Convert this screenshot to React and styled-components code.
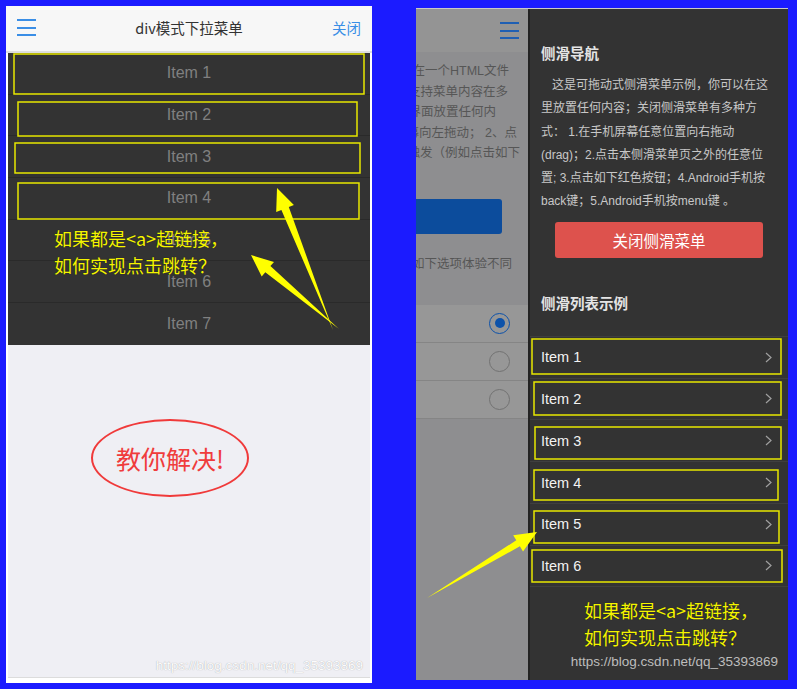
import React from "react";
import styled, { createGlobalStyle } from "styled-components";

const FONT = `"Liberation Sans", Arial, "Noto Sans CJK SC", sans-serif`;
const CJK = `"Noto Sans CJK SC", "Liberation Sans", sans-serif`;

const Global = createGlobalStyle`
  html, body { margin: 0; padding: 0; background: #1b1bff; }
  body { font-family: ${FONT}; }
  * { box-sizing: border-box; }
`;

const Page = styled.div`
  width: 797px;
  height: 689px;
  overflow: hidden;
  display: flex;
  align-items: flex-start;
  gap: 44px;
  padding: 6px 0 0 6px;
`;

/* ---------- left phone ---------- */
const DropPhone = styled.section`
  position: relative;
  width: 366px;
  height: 677px;
  background: #fff;
  display: flex;
  flex-direction: column;
  padding: 0 2px 5px;
`;

const TopBar = styled.header`
  height: 47px;
  margin: 0 -2px;
  background: #f7f7f7;
  border-bottom: 2px solid #dedede;
  display: grid;
  grid-template-columns: 1fr auto 1fr;
  align-items: center;
  padding: 0 11px 2px;
`;

const Burger = styled.span`
  display: flex;
  flex-direction: column;
  gap: 5.5px;
  width: 19px;
  justify-self: ${(p) => p.$align || "start"};
  & > i {
    display: block;
    height: 2px;
    background: ${(p) => p.$color};
  }
`;

const Title = styled.h1`
  margin: 0;
  font-family: ${CJK};
  font-weight: 400;
  font-size: 14.5px;
  color: #333;
`;

const CloseLink = styled.a`
  justify-self: end;
  font-family: ${CJK};
  font-size: 14.5px;
  color: #3a8ee6;
`;

const Content = styled.main`
  flex: 1;
  background: #efeff4;
  border-bottom: 1px solid #dcdcdc;
`;

const Menu = styled.nav`
  background: #333;
`;

const MenuRow = styled.div`
  height: 41.67px;
  display: flex;
  align-items: center;
  justify-content: center;
  font-size: 16px;
  color: #808080;
  border-bottom: 1px solid #2a2a2a;
  &:last-child { border-bottom: none; }
`;

const Callout = styled.div`
  position: absolute;
  left: 85px;
  top: 413px;
  width: 158px;
  height: 78px;
  border: 2px solid #f03a3a;
  border-radius: 50%;
  display: flex;
  align-items: center;
  justify-content: center;
  font-family: ${CJK};
  font-size: 25px;
  color: #f03c3c;
`;

const Watermark = styled.div`
  position: absolute;
  right: ${(p) => p.$right}px;
  top: ${(p) => p.$top}px;
  font-size: 13.5px;
  line-height: 16px;
  white-space: nowrap;
  color: ${(p) => (p.$light ? "#fcfcfc" : "#bdbdbd")};
  text-shadow: ${(p) => (p.$light ? "0 0 1px rgba(0,0,0,0.35)" : "none")};
`;

const Note = styled.div`
  position: absolute;
  left: ${(p) => p.$x}px;
  top: ${(p) => p.$y}px;
  font-family: ${CJK};
  font-size: 18px;
  line-height: 27px;
  color: #f4f400;
  white-space: nowrap;
  text-shadow: 0 0 1px rgba(0, 0, 0, 0.6);
`;

const Overlay = styled.svg`
  position: absolute;
  left: 0;
  top: 0;
  pointer-events: none;
  overflow: visible;
`;

/* ---------- right phone ---------- */
const DrawerPhone = styled.section`
  position: relative;
  width: 372px;
  height: 672px;
  margin-top: 2px;
  display: flex;
  border-top: 1px solid #c9c9c9;
  overflow: hidden;
`;

const Backdrop = styled.div`
  width: 112px;
  flex: none;
  background: #8e8e90;
  overflow: hidden;
  display: flex;
  flex-direction: column;
`;

const BackBar = styled.div`
  height: 43px;
  background: #949494;
  display: flex;
  align-items: center;
  justify-content: flex-end;
  padding-right: 9px;
`;

const BackText = styled.div`
  padding-top: 9px;
  font-family: ${FONT};
  font-size: 12.5px;
  line-height: 20.5px;
  color: #565656;
`;

const BackLine = styled.div`
  display: flex;
  justify-content: flex-end;
  white-space: nowrap;
  padding-right: ${(p) => p.$r}px;
`;

const BackButton = styled.div`
  height: 35px;
  margin: 35px 26px 0 -20px;
  background: #0c4c9c;
  border-radius: 3px;
`;

const BackNote = styled(BackLine)`
  margin-top: 20px;
  line-height: 20px;
  font-family: ${FONT};
  font-size: 12.5px;
  color: #565656;
`;

const RadioList = styled.div`
  margin-top: 31px;
  background: #979797;
`;

const RadioRow = styled.div`
  height: 38px;
  display: flex;
  align-items: center;
  justify-content: flex-end;
  padding-right: 18px;
  border-bottom: 1px solid #858585;
`;

const Radio = styled.span`
  width: 21px;
  height: 21px;
  border-radius: 50%;
  border: 1.5px solid ${(p) => (p.$on ? "#0d52aa" : "#727272")};
  display: flex;
  align-items: center;
  justify-content: center;
  &::after {
    content: "";
    display: ${(p) => (p.$on ? "block" : "none")};
    width: 10px;
    height: 10px;
    border-radius: 50%;
    background: #0d52aa;
  }
`;

const Drawer = styled.aside`
  flex: 1;
  background: #333;
  border-left: 2px solid #232323;
  display: flex;
  flex-direction: column;
`;

const DrawerTitle = styled.h2`
  margin: ${(p) => p.$mt}px 0 0 11px;
  font-family: ${CJK};
  font-size: 14.5px;
  line-height: 20px;
  font-weight: 700;
  color: #e4e4e4;
`;

const DrawerText = styled.p`
  margin: 11px 0 0 11px;
  font-family: ${FONT};
  font-size: 12px;
  line-height: 23.3px;
  color: #c8c8c8;
  white-space: nowrap;
  text-indent: 11px;
`;

const CloseButton = styled.button`
  margin: 8px 0 0 25px;
  width: 208px;
  height: 36px;
  border: none;
  border-radius: 3px;
  background: #dd524d;
  color: #fff;
  font-family: ${CJK};
  font-size: 15.5px;
  padding: 0;
`;

const List = styled.ul`
  list-style: none;
  margin: 23px 0 0;
  padding: 0;
`;

const ListRow = styled.li`
  height: 41.8px;
  border-top: 1px solid #3f3f3f;
  display: flex;
  align-items: center;
  justify-content: space-between;
  padding: 0 16px 0 11px;
  font-size: 14.5px;
  color: #f2f2f2;
  &:last-child { border-bottom: 1px solid #3f3f3f; }
`;

function arrowPoints(tail, tip, headLen, headW, shaftW) {
  const [x1, y1] = tail;
  const [x2, y2] = tip;
  const dx = x2 - x1;
  const dy = y2 - y1;
  const L = Math.hypot(dx, dy);
  const ux = dx / L;
  const uy = dy / L;
  const nx = -uy;
  const ny = ux;
  const bx = x2 - ux * headLen;
  const by = y2 - uy * headLen;
  const p = (x, y) => `${x.toFixed(1)},${y.toFixed(1)}`;
  return [
    p(x1, y1),
    p(bx + (nx * shaftW) / 2, by + (ny * shaftW) / 2),
    p(bx + (nx * headW) / 2, by + (ny * headW) / 2),
    p(x2, y2),
    p(bx - (nx * headW) / 2, by - (ny * headW) / 2),
    p(bx - (nx * shaftW) / 2, by - (ny * shaftW) / 2),
  ].join(" ");
}

const Chevron = () => (
  <svg width="7" height="11" viewBox="0 0 7 11">
    <polyline points="1,1 6,5.5 1,10" fill="none" stroke="#a0a0a0" strokeWidth="1.2" />
  </svg>
);

const YELLOW = "#e8e800";

const leftBoxes = [
  [8, 48, 350, 40],
  [12, 96, 339, 34],
  [9, 137, 345, 30],
  [12, 177, 341, 36],
];

const rightBoxes = [
  [116, 330, 249, 35],
  [118, 373, 247, 33],
  [119, 418, 246, 32],
  [118, 461, 244, 30],
  [118, 502, 245, 32],
  [116, 541, 250, 32],
];

const backLines = [
  { t: "的侧滑菜单放在一个HTML文件", r: 19 },
  { t: "中，支持菜单内容在多", r: 20 },
  { t: "个界面放置任何内", r: 32 },
  { t: "屏幕向左拖动； 2、点", r: 11 },
  { t: "触发（例如点击如下", r: 8 },
];

export default function App() {
  return (
    <>
      <Global />
      <Page>
        <DropPhone>
          <TopBar>
            <Burger $color="#3a8ee6">
              <i />
              <i />
              <i />
            </Burger>
            <Title>div模式下拉菜单</Title>
            <CloseLink>关闭</CloseLink>
          </TopBar>
          <Content>
            <Menu>
              {[1, 2, 3, 4, 5, 6, 7].map((n) => (
                <MenuRow key={n}>Item {n}</MenuRow>
              ))}
            </Menu>
          </Content>
          <Callout>教你解决!</Callout>
          <Watermark $light $right={9} $top={652}>
            https://blog.csdn.net/qq_35393869
          </Watermark>
          <Overlay width="366" height="677" viewBox="0 0 366 677">
            {leftBoxes.map(([x, y, w, h], i) => (
              <rect key={i} x={x} y={y} width={w} height={h} fill="none" stroke={YELLOW} strokeWidth="1.5" />
            ))}
            <polygon points={arrowPoints([327, 324], [271, 182], 22, 19, 8)} fill="#ffff00" />
            <polygon points={arrowPoints([333, 323], [245, 249], 22, 19, 8)} fill="#ffff00" />
          </Overlay>
          <Note $x={48} $y={219}>
            如果都是&lt;a&gt;超链接，
            <br />
            如何实现点击跳转？
          </Note>
        </DropPhone>

        <DrawerPhone>
          <Backdrop>
            <BackBar>
              <Burger $color="#1f5fb3" $align="end">
                <i />
                <i />
                <i />
              </Burger>
            </BackBar>
            <BackText>
              {backLines.map((l, i) => (
                <BackLine key={i} $r={l.r}>
                  <span>{l.t}</span>
                </BackLine>
              ))}
            </BackText>
            <BackButton />
            <BackNote $r={16}>
              <span>请点击如下选项体验不同</span>
            </BackNote>
            <RadioList>
              <RadioRow>
                <Radio $on />
              </RadioRow>
              <RadioRow>
                <Radio />
              </RadioRow>
              <RadioRow>
                <Radio />
              </RadioRow>
            </RadioList>
          </Backdrop>
          <Drawer>
            <DrawerTitle $mt={34}>侧滑导航</DrawerTitle>
            <DrawerText>
              这是可拖动式侧滑菜单示例，你可以在这
              <br />
              里放置任何内容；关闭侧滑菜单有多种方
              <br />
              式： 1.在手机屏幕任意位置向右拖动
              <br />
              (drag)；2.点击本侧滑菜单页之外的任意位
              <br />
              置; 3.点击如下红色按钮；4.Android手机按
              <br />
              back键；5.Android手机按menu键 。
            </DrawerText>
            <CloseButton>关闭侧滑菜单</CloseButton>
            <DrawerTitle $mt={35}>侧滑列表示例</DrawerTitle>
            <List>
              {[1, 2, 3, 4, 5, 6].map((n) => (
                <ListRow key={n}>
                  <span>Item {n}</span>
                  <Chevron />
                </ListRow>
              ))}
            </List>
          </Drawer>
          <Overlay width="372" height="671" viewBox="0 0 372 671">
            {rightBoxes.map(([x, y, w, h], i) => (
              <rect key={i} x={x} y={y} width={w} height={h} fill="none" stroke={YELLOW} strokeWidth="1.5" />
            ))}
            <polygon points={arrowPoints([11, 589], [121, 523], 22, 19, 7)} fill="#ffff00" />
          </Overlay>
          <Note $x={168} $y={588}>
            如果都是&lt;a&gt;超链接，
            <br />
            如何实现点击跳转？
          </Note>
          <Watermark $right={10} $top={645}>
            https://blog.csdn.net/qq_35393869
          </Watermark>
        </DrawerPhone>
      </Page>
    </>
  );
}
